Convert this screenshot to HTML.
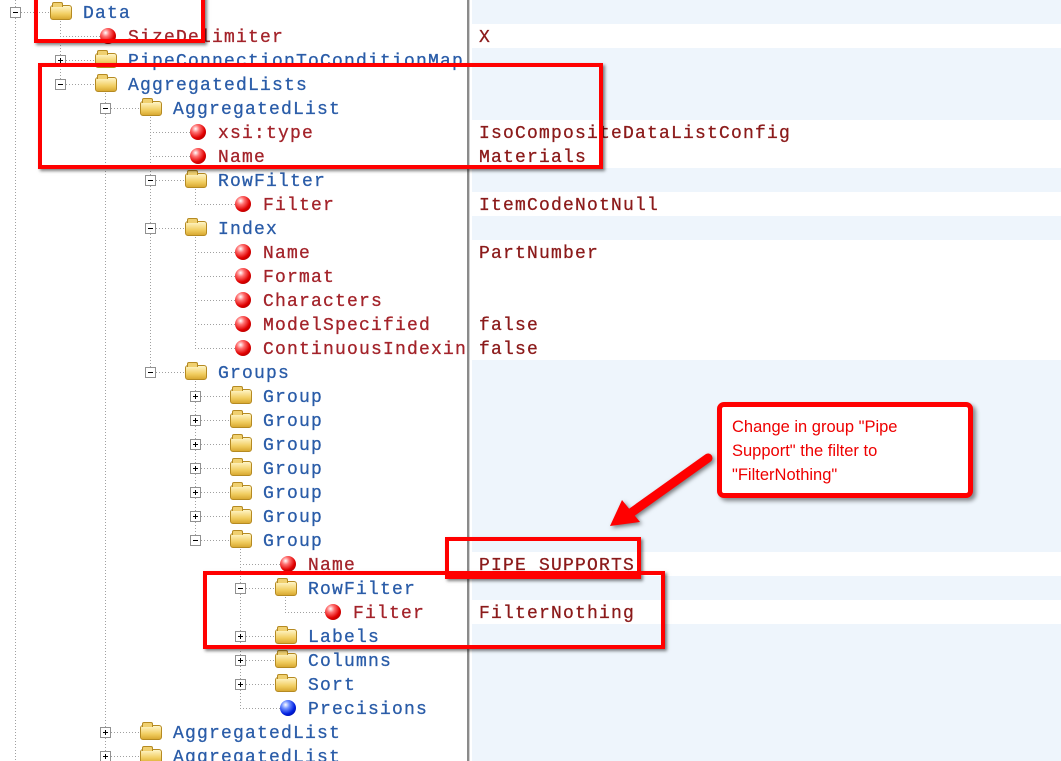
<!DOCTYPE html>
<html><head><meta charset="utf-8"><style>
body{margin:0;width:1061px;height:761px;overflow:hidden;background:#fff;position:relative;font-family:"Liberation Mono",monospace}
.band{position:absolute;left:472px;width:589px;height:24px;background:#eef5fc}
.div{position:absolute;left:467px;top:0;width:2px;height:761px;background:#8a8a8a}
.div2{position:absolute;left:469px;top:0;width:1px;height:761px;background:#d0d0d0}
.t{position:absolute;font-size:18px;letter-spacing:1.2px;line-height:24px;white-space:nowrap;transform:translateY(2px);-webkit-text-stroke:0.3px}
.f{color:#2a5ca8}.l{color:#a3232a}.v{color:#8b1a1a;left:479px}
.fo{position:absolute;width:22px;height:15px;border-radius:3px;background:linear-gradient(#fff6c8,#f2cf63 60%,#d9a932);border:1px solid #b58a22;box-sizing:border-box}
.fo:before{content:"";position:absolute;left:1px;top:-4px;width:9px;height:4px;background:#f0d070;border:1px solid #b58a22;border-bottom:none;border-radius:2px 2px 0 0}
.sp{position:absolute;width:16px;height:16px;border-radius:50%;background:radial-gradient(circle at 35% 30%,#fff 0,#ff7070 25%,#e00000 60%,#8a0000 100%)}
.bl{background:radial-gradient(circle at 35% 30%,#fff 0,#7090ff 25%,#0020e0 60%,#000080 100%)}
.ex{position:absolute;width:11px;height:11px;margin:-1px 0 0 -1px;border:1px solid #919191;background:#fff;box-sizing:border-box}
.ex:after{content:"";position:absolute;left:2px;top:4px;width:5px;height:1px;background:#000}
.p:before{content:"";position:absolute;left:4px;top:2px;width:1px;height:5px;background:#000}
.lf{position:absolute;left:0;top:0;width:466px;height:761px;overflow:hidden}
.rb{position:absolute;border:4px solid #f00;box-shadow:2px 2px 3px rgba(0,0,0,.5)}
</style></head><body>
<div class="band" style="top:0"></div><div class="band" style="top:48px;height:72px"></div>
<div class="band" style="top:168px"></div><div class="band" style="top:216px"></div>
<div class="band" style="top:360px;height:192px"></div><div class="band" style="top:576px"></div>
<div class="band" style="top:624px;height:137px"></div>
<div class="div"></div><div class="div2"></div>
<div class="lf">
<svg width="466" height="761" style="position:absolute;left:0;top:0" stroke="#a0a0a0" stroke-dasharray="1 2" stroke-width="1">
<line x1="15.5" y1="0" x2="15.5" y2="761"/><line x1="60.5" y1="12" x2="60.5" y2="84"/>
<line x1="105.5" y1="84" x2="105.5" y2="761"/><line x1="150.5" y1="108" x2="150.5" y2="372"/>
<line x1="195.5" y1="180" x2="195.5" y2="204"/><line x1="195.5" y1="228" x2="195.5" y2="348"/>
<line x1="195.5" y1="372" x2="195.5" y2="540"/><line x1="240.5" y1="540" x2="240.5" y2="708"/>
<line x1="285.5" y1="588" x2="285.5" y2="612"/>
<line x1="15" y1="12.5" x2="50" y2="12.5"/><line x1="60" y1="36.5" x2="100" y2="36.5"/>
<line x1="60" y1="60.5" x2="95" y2="60.5"/><line x1="60" y1="84.5" x2="95" y2="84.5"/>
<line x1="105" y1="108.5" x2="140" y2="108.5"/><line x1="150" y1="132.5" x2="190" y2="132.5"/>
<line x1="150" y1="156.5" x2="190" y2="156.5"/><line x1="150" y1="180.5" x2="185" y2="180.5"/>
<line x1="195" y1="204.5" x2="235" y2="204.5"/><line x1="150" y1="228.5" x2="185" y2="228.5"/>
<line x1="195" y1="252.5" x2="235" y2="252.5"/><line x1="195" y1="276.5" x2="235" y2="276.5"/>
<line x1="195" y1="300.5" x2="235" y2="300.5"/><line x1="195" y1="324.5" x2="235" y2="324.5"/>
<line x1="195" y1="348.5" x2="235" y2="348.5"/><line x1="150" y1="372.5" x2="185" y2="372.5"/>
<line x1="195" y1="396.5" x2="230" y2="396.5"/><line x1="195" y1="420.5" x2="230" y2="420.5"/>
<line x1="195" y1="444.5" x2="230" y2="444.5"/><line x1="195" y1="468.5" x2="230" y2="468.5"/>
<line x1="195" y1="492.5" x2="230" y2="492.5"/><line x1="195" y1="516.5" x2="230" y2="516.5"/>
<line x1="195" y1="540.5" x2="230" y2="540.5"/><line x1="240" y1="564.5" x2="280" y2="564.5"/>
<line x1="240" y1="588.5" x2="275" y2="588.5"/><line x1="285" y1="612.5" x2="325" y2="612.5"/>
<line x1="240" y1="636.5" x2="275" y2="636.5"/><line x1="240" y1="660.5" x2="275" y2="660.5"/>
<line x1="240" y1="684.5" x2="275" y2="684.5"/><line x1="240" y1="708.5" x2="280" y2="708.5"/>
<line x1="105" y1="732.5" x2="140" y2="732.5"/><line x1="105" y1="756.5" x2="140" y2="756.5"/>
</svg>
<div class="ex" style="left:11px;top:8px"></div>
<div class="ex p" style="left:56px;top:56px"></div><div class="ex" style="left:56px;top:80px"></div>
<div class="ex" style="left:101px;top:104px"></div>
<div class="ex" style="left:146px;top:176px"></div><div class="ex" style="left:146px;top:224px"></div><div class="ex" style="left:146px;top:368px"></div>
<div class="ex p" style="left:191px;top:392px"></div><div class="ex p" style="left:191px;top:416px"></div><div class="ex p" style="left:191px;top:440px"></div>
<div class="ex p" style="left:191px;top:464px"></div><div class="ex p" style="left:191px;top:488px"></div><div class="ex p" style="left:191px;top:512px"></div>
<div class="ex" style="left:191px;top:536px"></div>
<div class="ex" style="left:236px;top:584px"></div><div class="ex p" style="left:236px;top:632px"></div><div class="ex p" style="left:236px;top:656px"></div><div class="ex p" style="left:236px;top:680px"></div>
<div class="ex p" style="left:101px;top:728px"></div><div class="ex p" style="left:101px;top:752px"></div>

<div class="fo" style="left:50px;top:5px"></div><div class="t f" style="left:83px;top:0">Data</div>
<div class="sp" style="left:100px;top:28px"></div><div class="t l" style="left:128px;top:24px">SizeDelimiter</div>
<div class="fo" style="left:95px;top:53px"></div><div class="t f" style="left:128px;top:48px">PipeConnectionToConditionMap</div>
<div class="fo" style="left:95px;top:77px"></div><div class="t f" style="left:128px;top:72px">AggregatedLists</div>
<div class="fo" style="left:140px;top:101px"></div><div class="t f" style="left:173px;top:96px">AggregatedList</div>
<div class="sp" style="left:190px;top:124px"></div><div class="t l" style="left:218px;top:120px">xsi:type</div>
<div class="sp" style="left:190px;top:148px"></div><div class="t l" style="left:218px;top:144px">Name</div>
<div class="fo" style="left:185px;top:173px"></div><div class="t f" style="left:218px;top:168px">RowFilter</div>
<div class="sp" style="left:235px;top:196px"></div><div class="t l" style="left:263px;top:192px">Filter</div>
<div class="fo" style="left:185px;top:221px"></div><div class="t f" style="left:218px;top:216px">Index</div>
<div class="sp" style="left:235px;top:244px"></div><div class="t l" style="left:263px;top:240px">Name</div>
<div class="sp" style="left:235px;top:268px"></div><div class="t l" style="left:263px;top:264px">Format</div>
<div class="sp" style="left:235px;top:292px"></div><div class="t l" style="left:263px;top:288px">Characters</div>
<div class="sp" style="left:235px;top:316px"></div><div class="t l" style="left:263px;top:312px">ModelSpecified</div>
<div class="sp" style="left:235px;top:340px"></div><div class="t l" style="left:263px;top:336px">ContinuousIndexing</div>
<div class="fo" style="left:185px;top:365px"></div><div class="t f" style="left:218px;top:360px">Groups</div>
<div class="fo" style="left:230px;top:389px"></div><div class="t f" style="left:263px;top:384px">Group</div>
<div class="fo" style="left:230px;top:413px"></div><div class="t f" style="left:263px;top:408px">Group</div>
<div class="fo" style="left:230px;top:437px"></div><div class="t f" style="left:263px;top:432px">Group</div>
<div class="fo" style="left:230px;top:461px"></div><div class="t f" style="left:263px;top:456px">Group</div>
<div class="fo" style="left:230px;top:485px"></div><div class="t f" style="left:263px;top:480px">Group</div>
<div class="fo" style="left:230px;top:509px"></div><div class="t f" style="left:263px;top:504px">Group</div>
<div class="fo" style="left:230px;top:533px"></div><div class="t f" style="left:263px;top:528px">Group</div>
<div class="sp" style="left:280px;top:556px"></div><div class="t l" style="left:308px;top:552px">Name</div>
<div class="fo" style="left:275px;top:581px"></div><div class="t f" style="left:308px;top:576px">RowFilter</div>
<div class="sp" style="left:325px;top:604px"></div><div class="t l" style="left:353px;top:600px">Filter</div>
<div class="fo" style="left:275px;top:629px"></div><div class="t f" style="left:308px;top:624px">Labels</div>
<div class="fo" style="left:275px;top:653px"></div><div class="t f" style="left:308px;top:648px">Columns</div>
<div class="fo" style="left:275px;top:677px"></div><div class="t f" style="left:308px;top:672px">Sort</div>
<div class="sp bl" style="left:280px;top:700px"></div><div class="t f" style="left:308px;top:696px">Precisions</div>
<div class="fo" style="left:140px;top:725px"></div><div class="t f" style="left:173px;top:720px">AggregatedList</div>
<div class="fo" style="left:140px;top:749px"></div><div class="t f" style="left:173px;top:744px">AggregatedList</div>
</div>

<div class="t v" style="top:24px">X</div>
<div class="t v" style="top:120px">IsoCompositeDataListConfig</div>
<div class="t v" style="top:144px">Materials</div>
<div class="t v" style="top:192px">ItemCodeNotNull</div>
<div class="t v" style="top:240px">PartNumber</div>
<div class="t v" style="top:312px">false</div>
<div class="t v" style="top:336px">false</div>
<div class="t v" style="top:552px">PIPE SUPPORTS</div>
<div class="t v" style="top:600px">FilterNothing</div>

<div class="rb" style="left:34px;top:-6px;width:163px;height:41px"></div>
<div class="rb" style="left:38px;top:63px;width:557px;height:98px"></div>
<div class="rb" style="left:445px;top:537px;width:188px;height:34px"></div>
<div class="rb" style="left:203px;top:571px;width:454px;height:70px"></div>

<div style="position:absolute;left:717px;top:402px;width:236px;height:86px;border:5px solid #f00;border-radius:7px;background:#fff;box-shadow:3px 3px 4px rgba(0,0,0,.45);font-family:'Liberation Sans',sans-serif;font-size:16.5px;line-height:24px;color:#e00;padding:0 0 0 10px;box-sizing:content-box">
<div style="padding-top:8px">Change in group "Pipe<br>Support" the filter to<br>"FilterNothing"</div></div>
<svg width="1061" height="761" style="position:absolute;left:0;top:0">
<g filter="drop-shadow(2px 2px 2px rgba(0,0,0,.5))">
<line x1="708" y1="458" x2="628" y2="515" stroke="#f00" stroke-width="9" stroke-linecap="round"/>
<polygon points="610,526 622,500 640,522" fill="#f00"/>
</g></svg>
</body></html>
